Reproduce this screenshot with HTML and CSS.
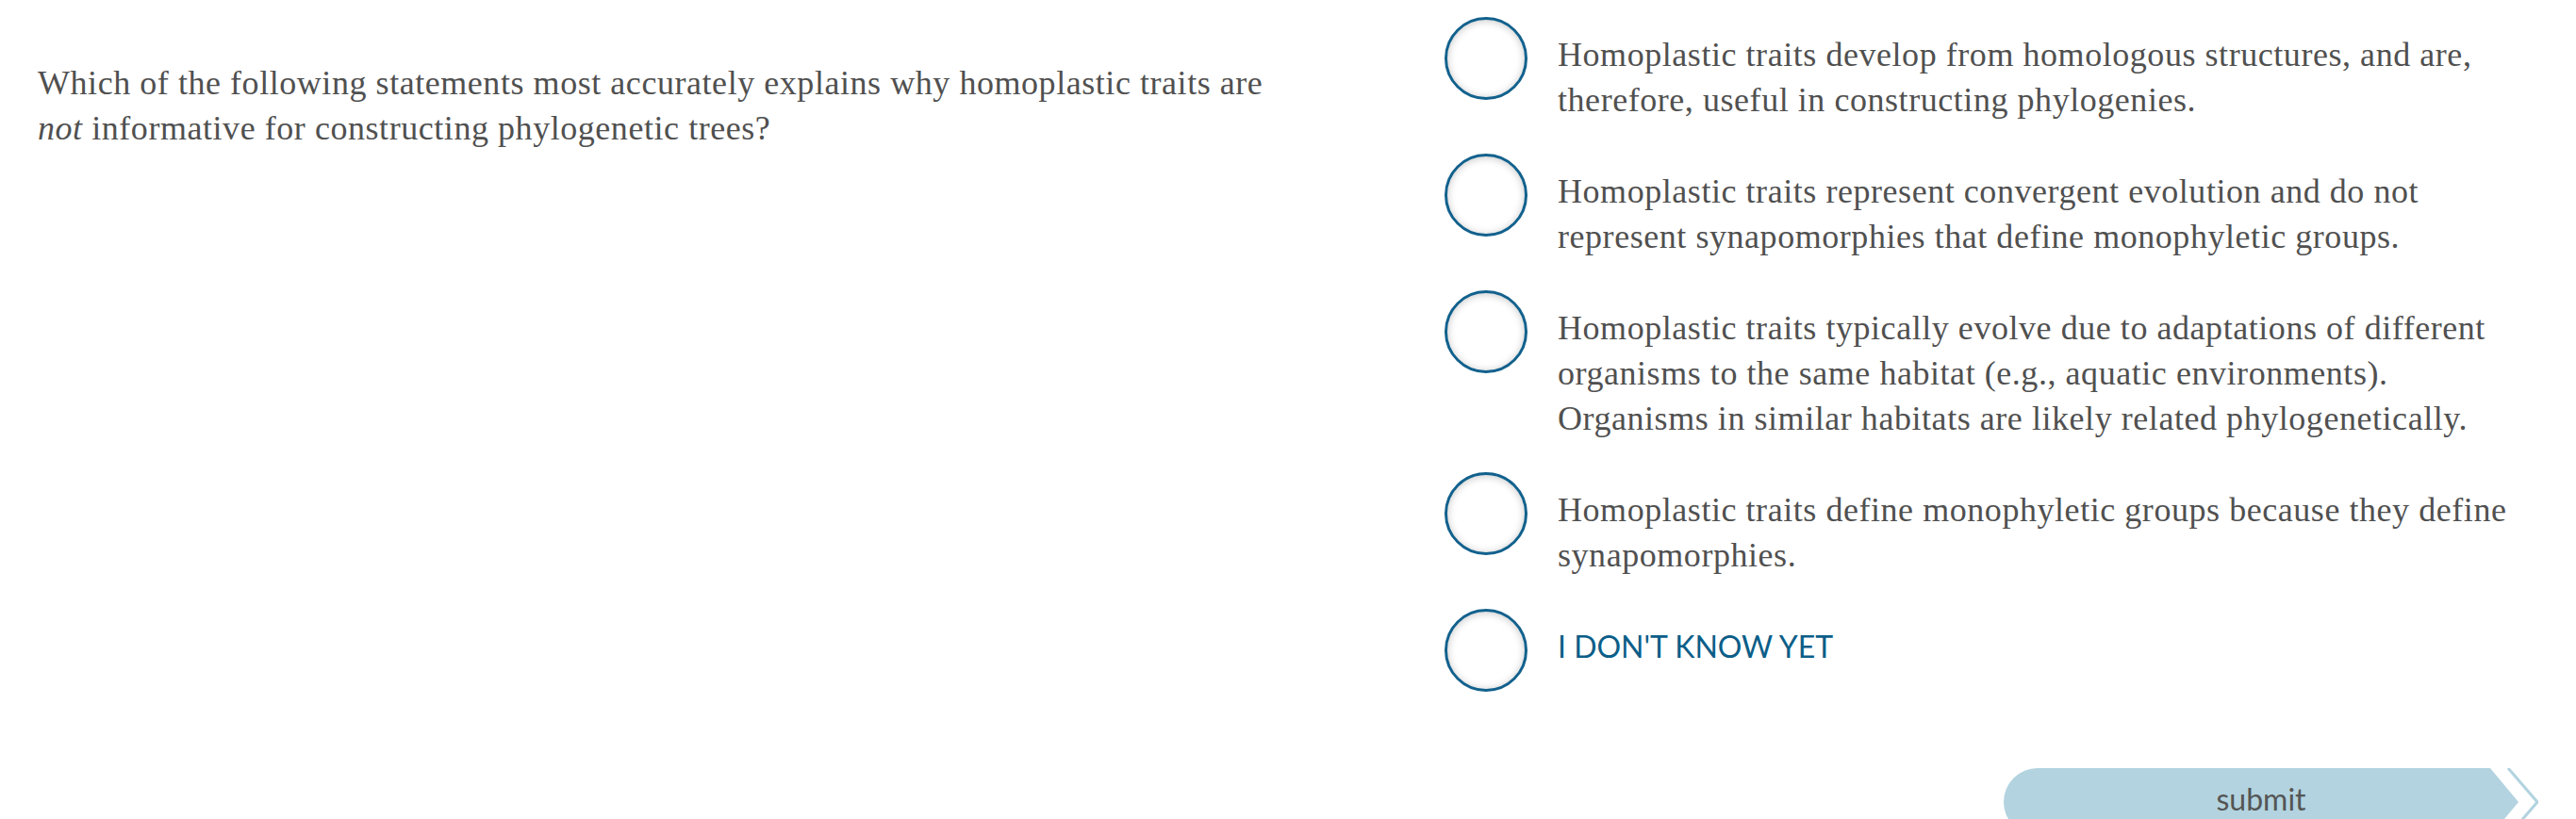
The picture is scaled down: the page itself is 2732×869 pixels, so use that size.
FILE: index.html
```html
<!DOCTYPE html>
<html lang="en">
<head>
<meta charset="utf-8">
<title>Question</title>
<link rel="stylesheet" href="styles.css">
</head>
<body>
<main class="quiz">
  <section class="question">
    <p class="prompt">Which of the following statements most accurately explains why homoplastic traits are <em>not</em> informative for constructing phylogenetic trees?</p>
  </section>
  <section class="answers">
    <ul class="options">
      <li class="option">
        <span class="radio"></span>
        <span class="label">Homoplastic traits develop from homologous structures, and are, therefore, useful in constructing phylogenies.</span>
      </li>
      <li class="option">
        <span class="radio"></span>
        <span class="label">Homoplastic traits represent convergent evolution and do not represent synapomorphies that define monophyletic groups.</span>
      </li>
      <li class="option">
        <span class="radio"></span>
        <span class="label">Homoplastic traits typically evolve due to adaptations of different organisms to the same habitat (e.g., aquatic environments). Organisms in similar habitats are likely related phylogenetically.</span>
      </li>
      <li class="option">
        <span class="radio"></span>
        <span class="label">Homoplastic traits define monophyletic groups because they define synapomorphies.</span>
      </li>
      <li class="option">
        <span class="radio"></span>
        <span class="label label-unknown">I DON'T KNOW YET</span>
      </li>
    </ul>
    <div class="actions">
      <button class="submit" type="button">
        <svg class="submit-shape" width="567" height="72" viewBox="0 0 567 72" aria-hidden="true">
          <path d="M36 0 H516 L546 36 L516 72 H36 A36 36 0 0 1 36 0 Z" fill="#b2d3df"/>
          <path d="M535 0 L566 36 L535 72" fill="none" stroke="#b2d3df" stroke-width="3"/>
        </svg>
        <span class="submit-text">submit</span>
      </button>
    </div>
  </section>
</main>
</body>
</html>
```

FILE: styles.css
```css
html, body {
  margin: 0;
  padding: 0;
  background: #ffffff;
}

body {
  font-family: "Liberation Serif", "Times New Roman", serif;
  color: #505050;
}

.quiz {
  display: flex;
  padding: 0 40px;
}

.question {
  width: 1492px;
  flex: none;
}

.prompt {
  margin: 0;
  padding-top: 64px;
  width: 1340px;
  font-size: 36px;
  letter-spacing: 0.55px;
  line-height: 48px;
}

.prompt em {
  font-style: italic;
}

.answers {
  flex: 1;
  display: flex;
  flex-direction: column;
}

.options {
  list-style: none;
  margin: 0;
  padding: 18px 0 0 0;
  display: flex;
  flex-direction: column;
  gap: 33px;
}

.option {
  display: flex;
  align-items: flex-start;
  gap: 32px;
}

.radio {
  flex: none;
  width: 82px;
  height: 82px;
  border: 3px solid #12618d;
  border-radius: 50%;
  background: #ffffff;
  box-shadow: inset 0 1px 9px rgba(0, 0, 0, 0.22);
}

.label {
  padding-top: 16px;
  font-size: 36px;
  letter-spacing: 0.55px;
  line-height: 48px;
}

.label-unknown {
  font-family: "Lato", "Liberation Sans", sans-serif;
  font-size: 32px;
  letter-spacing: 0;
  color: #0b5e88;
}

.actions {
  display: flex;
  justify-content: flex-end;
  margin-top: 81px;
}

.submit {
  position: relative;
  width: 567px;
  height: 72px;
  padding: 0 21px 8px 0;
  border: 0;
  background: transparent;
  cursor: pointer;
  display: flex;
  align-items: center;
  justify-content: center;
}

.submit-shape {
  position: absolute;
  left: 0;
  top: 0;
}

.submit-text {
  position: relative;
  font-family: "Lato", "Liberation Sans", sans-serif;
  font-size: 32px;
  color: #555555;
}
```
